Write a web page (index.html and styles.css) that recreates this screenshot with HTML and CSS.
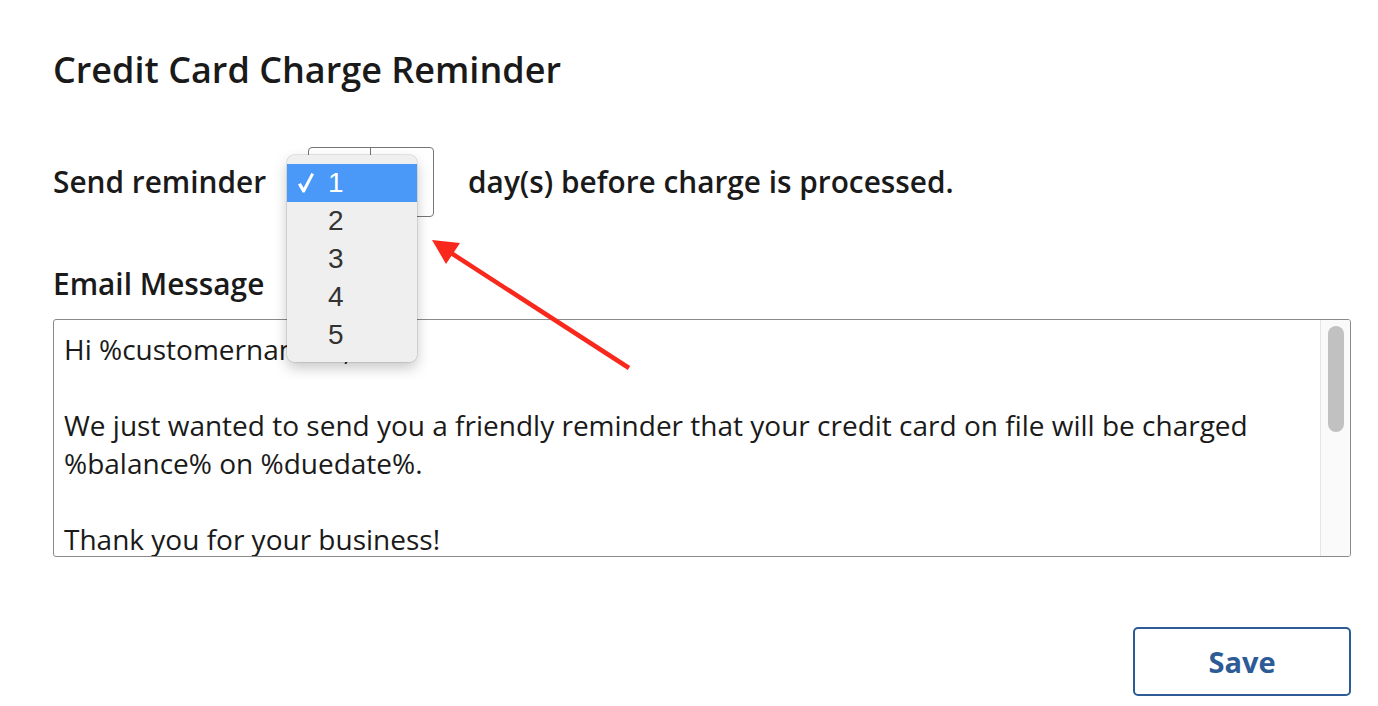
FILE: index.html
```html
<!DOCTYPE html>
<html lang="en">
<head>
<meta charset="utf-8">
<title>Credit Card Charge Reminder</title>
<link rel="stylesheet" href="styles.css">
</head>
<body>
<main class="page">
  <h1 class="title">Credit Card Charge Reminder</h1>

  <div class="reminder-row">
    <span class="label">Send reminder</span>
    <div class="select-wrap">
      <div class="select-box"><span class="select-divider"></span></div>
      <ul class="popup">
        <li class="opt selected">
          <svg class="check" width="16" height="20" viewBox="0 0 16 20" aria-hidden="true"><path d="M0 11.5 L2.8 10 L5.6 14.8 L13.4 0 L16 1.2 L6.6 19.6 L4.6 19.6 Z" fill="#fff"/></svg>1</li>
        <li class="opt">2</li>
        <li class="opt">3</li>
        <li class="opt">4</li>
        <li class="opt">5</li>
      </ul>
    </div>
    <span class="label">day(s) before charge is processed.</span>
  </div>

  <label class="label email-label" for="msg">Email Message</label>
  <div class="message-box">
    <textarea id="msg" class="message">Hi %customername%,

We just wanted to send you a friendly reminder that your credit card on file will be charged
%balance% on %duedate%.

Thank you for your business!

Sincerely,
%companyname%</textarea>
    <div class="scrollbar"><div class="thumb"></div></div>
  </div>

  <div class="actions">
    <button class="save" type="button">Save</button>
  </div>

  <svg class="arrow" width="1378" height="706" viewBox="0 0 1378 706" aria-hidden="true">
    <line x1="629" y1="368" x2="448" y2="251" stroke="#f8281d" stroke-width="4.5"/>
    <polygon points="432,240 460,243 446,264" fill="#f8281d"/>
  </svg>
</main>
</body>
</html>
```

FILE: styles.css
```css
* { box-sizing: border-box; }

html, body {
  margin: 0;
  padding: 0;
  background: #ffffff;
}

body {
  font-family: "Open Sans", "Liberation Sans", sans-serif;
  color: #1a1a1a;
  width: 1378px;
  height: 706px;
  overflow: hidden;
}

.page {
  position: relative;
  padding: 48px 27px 0 53px;
  display: flex;
  flex-direction: column;
}

.title {
  margin: 0;
  font-size: 36px;
  font-weight: 600;
  line-height: 44px;
  color: #1a1a1a;
}

.reminder-row {
  margin-top: 55px;
  height: 70px;
  display: flex;
  align-items: center;
}

.label {
  font-size: 29.8px;
  font-weight: 600;
  line-height: 36px;
  color: #1a1a1a;
}

.select-wrap {
  position: relative;
  width: 126px;
  height: 70px;
  margin: 0 34px 0 42px;
}

.select-box {
  width: 126px;
  height: 70px;
  border: 1.5px solid #767676;
  border-radius: 4px;
  background: #fff;
  position: relative;
}

.select-divider {
  position: absolute;
  left: 61px;
  top: 0;
  width: 1px;
  height: 12px;
  background: #767676;
}

.popup {
  position: absolute;
  left: -21px;
  top: 8px;
  width: 130px;
  margin: 0;
  padding: 9px 0 8px;
  list-style: none;
  background: #efefef;
  border-radius: 7px;
  box-shadow: 0 0 0 0.5px rgba(0,0,0,0.18), 0 6px 14px rgba(0,0,0,0.22);
  z-index: 2;
}

.opt {
  height: 38px;
  display: flex;
  align-items: center;
  padding-left: 41px;
  font-family: "Liberation Sans", Arial, sans-serif;
  font-size: 28px;
  color: #333;
  position: relative;
}

.opt.selected {
  background: #4a98f8;
  color: #fff;
}

.check {
  position: absolute;
  left: 11px;
  top: 9px;
}

.email-label {
  margin-top: 49px;
  display: block;
}

.message-box {
  margin-top: 17px;
  width: 1298px;
  height: 238px;
  border: 1.5px solid #8a8a8a;
  border-radius: 3px;
  display: flex;
  overflow: hidden;
  background: #fff;
}

.message {
  flex: 1;
  height: 100%;
  border: none;
  padding: 10px 10px;
  font-family: "Open Sans", sans-serif;
  font-size: 28px;
  line-height: 38px;
  color: #1a1a1a;
  resize: none;
  overflow: hidden;
  outline: none;
  background: transparent;
}

.scrollbar {
  width: 30px;
  height: 100%;
  background: #fafafa;
  border-left: 1px solid #e6e6e6;
  padding: 6px 6px 0 7px;
}

.thumb {
  width: 16px;
  height: 106px;
  border-radius: 8px;
  background: #c1c1c1;
}

.actions {
  margin-top: 70px;
  display: flex;
  justify-content: flex-end;
}

.save {
  width: 218px;
  height: 69px;
  border: 2px solid #2d5b95;
  border-radius: 5px;
  background: #fff;
  color: #2d5b95;
  font-family: "Open Sans", sans-serif;
  font-size: 29px;
  font-weight: 700;
  cursor: pointer;
}

.arrow {
  position: absolute;
  left: 0;
  top: 0;
  pointer-events: none;
  z-index: 3;
}
```
